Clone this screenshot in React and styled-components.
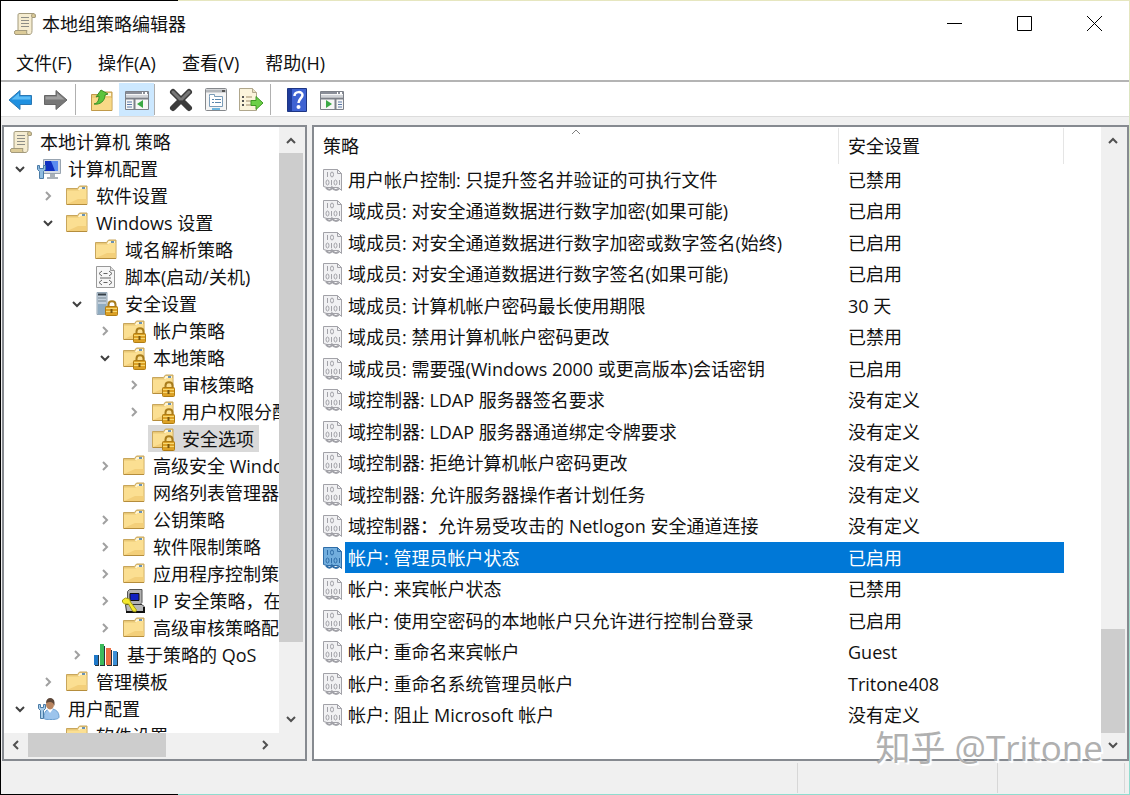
import React from "react";
import styled, { createGlobalStyle } from "styled-components";

const GlobalStyle = createGlobalStyle`
  * {
    box-sizing: border-box;
  }
  body {
    margin: 0;
    font-family: "Open Sans", "Noto Sans CJK SC", sans-serif;
    font-size: 18px;
    line-height: 26px;
    color: #111;
  }
  button {
    font: inherit;
    color: inherit;
    border: none;
    background: none;
    padding: 0;
    cursor: default;
  }
  svg {
    display: block;
    flex: none;
  }
`;

const Frame = styled.div`
  height: 100vh;
  padding: 1px;
  background: linear-gradient(90deg, #000 178px, transparent 178px),
    linear-gradient(#e6e6bf, #8fdccf);
`;

const Window = styled.main`
  display: flex;
  flex-direction: column;
  height: 100%;
  background: #f0f0f0;
  position: relative;
`;

const TitleBar = styled.header`
  display: flex;
  align-items: center;
  height: 45px;
  padding-left: 12px;
  background: #fff;
`;

const Title = styled.h1`
  flex: 1;
  margin: 0;
  padding-left: 5px;
  font-size: 18px;
  font-weight: 400;
`;

const CaptionButton = styled.button`
  display: flex;
  align-items: center;
  justify-content: center;
  width: 70px;
  height: 45px;
`;

const MenuBar = styled.nav`
  display: flex;
  align-items: flex-start;
  gap: 26px;
  height: 36px;
  padding: 4px 15px 0;
  background: #fff;
  border-bottom: 2px solid #b4b4b4;
`;

const ToolBar = styled.div`
  display: flex;
  align-items: center;
  height: 35px;
  padding: 1px 0 0 2px;
  background: #fff;
  border-bottom: 1px solid #dcdcdc;
`;

const ToolButton = styled.button`
  display: flex;
  align-items: center;
  justify-content: center;
  width: 35px;
  height: 33px;
  background: ${(props) => (props.$active ? "#cce8ff" : "transparent")};
`;

const ToolDivider = styled.span`
  width: 1px;
  height: 31px;
  margin: 0 8px 0 ${(props) => (props.$tight ? "0" : "2px")};
  background: #b0b0b0;
`;

const Panes = styled.div`
  display: grid;
  grid-template-columns: 305px minmax(0, 1fr);
  gap: 5px;
  flex: 1;
  min-height: 0;
  padding: 8px 0 0 1px;
`;

const Pane = styled.section`
  display: grid;
  grid-template-columns: minmax(0, 1fr) 26px;
  grid-template-rows: minmax(0, 1fr) auto;
  min-height: 0;
  border: 2px solid #868a90;
  background: #fff;
`;

const Tree = styled.ul`
  margin: 0;
  padding: 1px 0 0;
  list-style: none;
  overflow: hidden;
`;

const TreeRow = styled.li`
  display: flex;
  align-items: center;
  height: 27px;
  padding-left: ${(props) => props.$indent}px;
  white-space: nowrap;
`;

const Expander = styled.button`
  display: flex;
  align-items: center;
  justify-content: center;
  flex: none;
  width: 26px;
  height: 27px;
  padding-right: 2px;
`;

const TreeLabel = styled.span`
  display: flex;
  align-items: center;
  gap: 7px;
  height: 27px;
  padding: 0 5px 0 3px;
  background: ${(props) => (props.$selected ? "#d9d9d9" : "transparent")};
`;

const ScrollBar = styled.div`
  display: flex;
  flex-direction: ${(props) => (props.$horizontal ? "row" : "column")};
  min-height: 0;
  padding: ${(props) => (props.$horizontal ? "0 2px 2px 0" : "2px 2px 2px 0")};
  background: #f0f0f0;
`;

const ScrollButton = styled.button`
  display: flex;
  align-items: center;
  justify-content: center;
  width: 24px;
  height: 24px;
  flex: none;
`;

const ScrollTrack = styled.div`
  display: flex;
  flex-direction: ${(props) => (props.$horizontal ? "row" : "column")};
  flex: 1;
`;

const Spacer = styled.span`
  flex: ${(props) => props.$size};
`;

const Thumb = styled.span`
  flex: ${(props) => props.$size};
  background: #cdcdcd;
`;

const Corner = styled.div`
  background: #f0f0f0;
`;

const TableArea = styled.div`
  overflow: hidden;
  padding-top: 1px;
`;

const Table = styled.table`
  width: 100%;
  table-layout: fixed;
  border-collapse: separate;
  border-spacing: 0;
`;

const NameCol = styled.col``;

const ValueCol = styled.col`
  width: 225px;
`;

const RestCol = styled.col`
  width: 37px;
`;

const HeadCell = styled.th`
  position: relative;
  height: 36px;
  padding: 0 0 0 9px;
  text-align: left;
  font-weight: 400;
  border-right: ${(props) => (props.$last ? "none" : "1px solid #e5e5e5")};
`;

const SortMark = styled.span`
  position: absolute;
  top: -2px;
  left: 50%;
  margin-left: -6px;
`;

const PolicyRow = styled.tr`
  height: 31px;
  &:nth-child(even) {
    height: 32px;
  }
`;

const Cell = styled.td`
  padding: 0 0 0 9px;
  height: inherit;
  white-space: nowrap;
  color: ${(props) => (props.$selected ? "#fff" : "inherit")};
  background: ${(props) => (props.$selected ? "#0078d7" : "transparent")};
`;

const NameCell = styled.td`
  height: inherit;
  padding: 0 0 0 8px;
`;

const PolicyName = styled.div`
  display: flex;
  align-items: center;
  gap: 1px;
  height: 100%;
`;

const NameText = styled.span`
  display: flex;
  align-items: center;
  flex: 1;
  height: 100%;
  padding-left: 3px;
  white-space: nowrap;
  color: ${(props) => (props.$selected ? "#fff" : "inherit")};
  background: ${(props) => (props.$selected ? "#0078d7" : "transparent")};
`;

const StatusBar = styled.footer`
  display: grid;
  grid-template-columns: minmax(0, 1fr) 200px 127px;
  height: 33px;
  padding: 2px 4px 1px 0;
`;

const StatusCell = styled.span`
  border-right: 1px solid #d7d7d7;
`;

const Watermark = styled.span`
  position: absolute;
  right: 26px;
  bottom: 26px;
  font-size: 35px;
  line-height: 40px;
  color: #b0b0b0;
  text-shadow: 1px 1px 0 #fff, 2px 2px 1px #fff;
  pointer-events: none;
`;

const Chevron = ({ dir, color = "#505050", size = 12, weight = 2 }) => {
  const points = {
    up: "2,8 6,4 10,8",
    down: "2,4 6,8 10,4",
    left: "8,2 4,6 8,10",
    right: "4,2 8,6 4,10",
  };
  return (
    <svg width={size} height={size} viewBox="0 0 12 12">
      <polyline points={points[dir]} fill="none" stroke={color} strokeWidth={weight} />
    </svg>
  );
};

const ScrollIcon = () => (
  <svg width="24" height="24" viewBox="0 0 24 24">
    <path d="M7 1.500h13c2 0 3 2 2 4h-3v13c0 3-1 4-3 4H3c-2 0-2-4 0-4h2V4c0-2 0-2.500 2-2.500z" fill="#f5ecd0" stroke="#a39a7c" />
    <path d="M19 5.500c-1-2 0-4 1-4 2 0 3 2 2 4zM3 18.500h11c-1 2 0 4 1 4H3c-2 0-2-4 0-4z" fill="#dccb98" stroke="#a39a7c" />
    <path d="M8 5.500h8M8 8.500h8M8 11.500h8M8 14.500h8" stroke="#8d8d86" />
  </svg>
);

const FolderShape = () => (
  <>
    <path d="M1.500 4.500h11l2-2.500h7.500v18.500H1.500z" fill="#e9c877" stroke="#c8a65c" />
    <path d="M14.500 3h6.500v3h-8z" fill="#fff6d8" />
    <path d="M17 4h3" stroke="#6b93b5" strokeWidth="2" />
    <path d="M2 6.500h11.500l2-1.500h6v15H2z" fill="#fbdf92" />
    <path d="M13 15h8.500v5H2z" fill="#f3cf7a" />
    <path d="M2 20.500h20" stroke="#b58d3c" />
  </>
);

const LockShape = () => (
  <>
    <path d="M14.500 15.500v-3c0-4.500 7-4.500 7 0v3" fill="none" stroke="#a87c1c" strokeWidth="2" />
    <rect x="11.500" y="14.500" width="12" height="9" rx="1" fill="#dca126" stroke="#b07d14" />
    <path d="M12 16.500h11M12 19.500h11" stroke="#f7d870" />
    <path d="M17.500 17v4" stroke="#7a570f" strokeWidth="2" />
  </>
);

const FolderIcon = () => (
  <svg width="24" height="24" viewBox="0 0 24 24">
    <FolderShape />
  </svg>
);

const LockedFolderIcon = () => (
  <svg width="24" height="24" viewBox="0 0 24 24">
    <FolderShape />
    <LockShape />
  </svg>
);

const ServerLockIcon = () => (
  <svg width="24" height="24" viewBox="0 0 24 24">
    <path d="M3 .5h10v22H3z" fill="#c3d0dc" stroke="#94a6b5" />
    <path d="M4 2.500h8" stroke="#333e47" strokeWidth="2" />
    <path d="M4 6h8M4 9h8" stroke="#74848f" />
    <path d="M4 12h8v10H4z" fill="#8fabc0" />
    <LockShape />
  </svg>
);

const ScriptIcon = () => (
  <svg width="24" height="24" viewBox="0 0 24 24">
    <path d="M2.500 1.500h14l4 4v17h-18z" fill="#f7f7f7" stroke="#999" />
    <path d="M16.500 1.500v4h4" fill="#ddd" stroke="#999" />
    <path d="M8 6L5 8.500 8 11M15 6l3 2.500-3 2.500M9.500 8.500h4M8 15l-3 2.500L8 20M15 15l3 2.500-3 2.500M9.500 17.500h4M6 13h11" fill="none" stroke="#666" />
  </svg>
);

const ComputerIcon = () => (
  <svg width="24" height="24" viewBox="0 0 24 24">
    <path d="M6.500 2.500h17v14h-17z" fill="#d5dbe2" stroke="#98a4b1" />
    <path d="M8 4h13v10H8z" fill="#1030c0" />
    <path d="M14 4h7v10h-3z" fill="#5b8cf0" />
    <path d="M13 17h5v3h3v2H10v-2h3z" fill="#a9b1b8" />
    <path d="M.5 8.500v4l2 2v7h4v-7l2-2v-4h-2v3h-4v-3z" fill="#8fbce0" stroke="#4a7ba6" />
  </svg>
);

const UserIcon = () => (
  <svg width="24" height="24" viewBox="0 0 24 24">
    <path d="M7 21c0-7 3-9 7-9 5 0 8 3 8 8 0 2-4 2.500-8 2.500s-7 0-7-1.500z" fill="#9cc4ec" stroke="#6b9fd0" />
    <path d="M10 12l3 4 3-4z" fill="#fff" />
    <ellipse cx="13" cy="7.500" rx="4" ry="5" fill="#b98560" />
    <path d="M9 6c0-7 9-6 8.500 0v3c-1-4-4-5-8.500-3z" fill="#5c4638" />
    <path d="M1.500 7.500v4l2 2v8h3v-8l2-2v-4h-2v3h-3v-3z" fill="#a9cdea" stroke="#4a7ba6" />
  </svg>
);

const IpSecIcon = () => (
  <svg width="24" height="24" viewBox="0 0 24 24">
    <path d="M5.500 2.500l2-2H20v13l-2 2H5.500z" fill="#b0b0b0" stroke="#555" />
    <path d="M8 4.500h9v7H8z" fill="#1020c0" stroke="#111" />
    <path d="M3.500 15.500H20l2 2v5H4.500z" fill="#b8b8b8" stroke="#333" />
    <path d="M4 23h18v-5" fill="none" stroke="#111" strokeWidth="2" />
    <path d="M.5 11l3-2 4 1 1 3 6 8-1 2-3-1-4-7-4 0-2-2z" fill="#f5e92c" stroke="#a39b14" />
  </svg>
);

const QosIcon = () => (
  <svg width="26" height="24" viewBox="0 0 26 24">
    <path d="M3 12h2v11H1v-1h2zM9 3h2v20H6v-1h3zM16 7h2v16h-5v-1h3zM22 9h2v14h-5v-1h3z" fill="#26323c" />
    <path d="M0 12h4v10H0z" fill="#1f78c8" />
    <path d="M6 1h4v21H6z" fill="#3cba5c" />
    <path d="M12 5h5v17h-5z" fill="#ee7043" />
    <path d="M19 8h4v14h-4z" fill="#3d8fd6" />
  </svg>
);

const PolicyIcon = ({ selected }) => {
  const line = selected ? "#2f6da8" : "#a2a2a8";
  return (
    <svg width="22" height="24" viewBox="0 0 22 24">
      <path d="M1.500 1.500h14l4 4v17l-3-3H5l-3.500-1z" fill={selected ? "#72aede" : "#f1f1f3"} stroke={line} />
      <path d="M15.500 1.500v4h4" fill="none" stroke={line} />
      <path d="M5.500 4v5M9.500 12v5" stroke={line} strokeWidth="1" />
      <ellipse cx="10" cy="6.500" rx="1.500" ry="2.500" fill="none" stroke={line} />
      <ellipse cx="5.500" cy="14.500" rx="1.500" ry="2.500" fill="none" stroke={line} />
      <ellipse cx="13.500" cy="14.500" rx="1.500" ry="2.500" fill="none" stroke={line} />
      <path d="M17.500 12v5" stroke={line} />
      <path d="M4 19.500c2 3 5 3 6 0 2 3 5 3 7 1" fill="none" stroke={line} strokeWidth="2" />
    </svg>
  );
};

const ArrowIcon = ({ flip, fill, light, stroke }) => (
  <svg width="25" height="22" viewBox="0 0 25 22">
    <g transform={flip ? "translate(25 0) scale(-1 1)" : undefined}>
      <path d="M1 11L12 1.500v5h11.500v9H12v5z" fill={fill} stroke={stroke} strokeLinejoin="round" />
      <path d="M3.500 10.500L11 4v3.500h11.500v3z" fill={light} />
    </g>
  </svg>
);

const UpFolderIcon = () => (
  <svg width="24" height="24" viewBox="0 0 24 24">
    <path d="M1.500 6.500h11l2-2.500h7.500v18.500H1.500z" fill="#eecb78" stroke="#c09a4a" />
    <path d="M16 5h5v3h-5z" fill="#fff6d8" />
    <path d="M2 10h19.500v12H2z" fill="#f8d987" />
    <path d="M4 16c4-1 5-4 5-8L6 9l5-7 7 4-3 1c0 6-5 10-11 9z" fill="#5cc43c" stroke="#3c8f26" />
  </svg>
);

const PanelIcon = ({ mirrored }) => (
  <svg width="26" height="24" viewBox="0 0 26 24">
    <path d="M1.500 3.500h23v18h-23z" fill="#f6f6f6" stroke="#7c8088" />
    <path d="M2 5h22" stroke="#8a8e98" strokeWidth="2" />
    <path d="M2 8h22" stroke="#d0d3d8" strokeWidth="2" />
    <path d="M2 10.500h22" stroke="#7c8088" strokeWidth="2" />
    <path d="M18 5h1M21 5h2" stroke="#fff" strokeWidth="2" />
    {mirrored ? (
      <>
        <path d="M16.500 11v10" stroke="#7c8088" strokeWidth="2" />
        <path d="M19 14h4M19 16.500h4M19 19h4" stroke="#5a78a8" />
        <path d="M7 12l6 4-6 4z" fill="#3aa844" />
      </>
    ) : (
      <>
        <path d="M10.500 11v10" stroke="#7c8088" strokeWidth="2" />
        <path d="M3 14h5M3 16.500h5M3 19h5" stroke="#5a78a8" />
        <path d="M19 12l-6 4 6 4z" fill="#3aa844" />
      </>
    )}
  </svg>
);

const DeleteIcon = () => (
  <svg width="26" height="26" viewBox="0 0 26 26">
    <path d="M5 5l16 16M21 5L5 21" stroke="#3c3c3c" strokeWidth="6" strokeLinecap="round" />
    <path d="M5 5l7 7M21 5l-7 7" stroke="#777" strokeWidth="3" strokeLinecap="round" />
  </svg>
);

const PropertiesIcon = () => (
  <svg width="24" height="24" viewBox="0 0 24 24">
    <rect x="1.500" y=".5" width="21" height="22" rx="1" fill="#f5f5f5" stroke="#85888c" />
    <path d="M2 3h20" stroke="#b4b7bb" strokeWidth="3" />
    <path d="M18 3h3" stroke="#555" strokeWidth="2" />
    <path d="M5.500 8.500v-2h5v2h8v10h-13z" fill="#fff" stroke="#7b9cb8" />
    <path d="M8 11.500h2M11 11.500h6M8 14.500h2M11 14.500h6" stroke="#5a86ad" />
    <path d="M8 20h8v2H8z" fill="#6fb7e0" />
  </svg>
);

const ExportIcon = () => (
  <svg width="26" height="26" viewBox="0 0 26 26">
    <path d="M1.500 1.500h13l4 4v18h-17z" fill="#fbf4dc" stroke="#b0a78c" />
    <path d="M14.500 1.500v4h4" fill="#e8dfc0" stroke="#b0a78c" />
    <path d="M4 10h2M4 14h2M4 18h2" stroke="#555" strokeWidth="2" />
    <path d="M8 10h6M8 14h5M8 18h5" stroke="#a08c6c" />
    <path d="M13 13.500h5v-4l7 6.500-7 6.500v-4h-5z" fill="#6bd048" stroke="#3f9826" />
  </svg>
);

const HelpIcon = () => (
  <svg width="22" height="26" viewBox="0 0 22 26">
    <path d="M1.500 1.500h19v23h-19z" fill="#3f63d2" stroke="#1e3684" />
    <path d="M2 2h4v22H2z" fill="#1f3c9c" />
    <path d="M8.500 9c0-5 8-5 8-1 0 3-4 4-4 8" fill="none" stroke="#fff" strokeWidth="2.500" />
    <circle cx="12.500" cy="20" r="2" fill="#fff" />
  </svg>
);

const treeIcons = {
  scroll: ScrollIcon,
  computer: ComputerIcon,
  folder: FolderIcon,
  locked: LockedFolderIcon,
  script: ScriptIcon,
  server: ServerLockIcon,
  ipsec: IpSecIcon,
  qos: QosIcon,
  user: UserIcon,
};

const indents = [2, 4, 32, 61, 89, 118];

const treeItems = [
  { level: 0, icon: "scroll", label: "本地计算机 策略" },
  { level: 1, icon: "computer", label: "计算机配置", state: "open" },
  { level: 2, icon: "folder", label: "软件设置", state: "closed" },
  { level: 2, icon: "folder", label: "Windows 设置", state: "open" },
  { level: 3, icon: "folder", label: "域名解析策略" },
  { level: 3, icon: "script", label: "脚本(启动/关机)" },
  { level: 3, icon: "server", label: "安全设置", state: "open" },
  { level: 4, icon: "locked", label: "帐户策略", state: "closed" },
  { level: 4, icon: "locked", label: "本地策略", state: "open" },
  { level: 5, icon: "locked", label: "审核策略", state: "closed" },
  { level: 5, icon: "locked", label: "用户权限分配", state: "closed" },
  { level: 5, icon: "locked", label: "安全选项", selected: true },
  { level: 4, icon: "folder", label: "高级安全 Windows", state: "closed" },
  { level: 4, icon: "folder", label: "网络列表管理器策略" },
  { level: 4, icon: "folder", label: "公钥策略", state: "closed" },
  { level: 4, icon: "folder", label: "软件限制策略", state: "closed" },
  { level: 4, icon: "folder", label: "应用程序控制策略", state: "closed" },
  { level: 4, icon: "ipsec", label: "IP 安全策略，在", state: "closed" },
  { level: 4, icon: "folder", label: "高级审核策略配置", state: "closed" },
  { level: 3, icon: "qos", label: "基于策略的 QoS", state: "closed" },
  { level: 2, icon: "folder", label: "管理模板", state: "closed" },
  { level: 1, icon: "user", label: "用户配置", state: "open" },
  { level: 2, icon: "folder", label: "软件设置" },
];

const policies = [
  ["用户帐户控制: 只提升签名并验证的可执行文件", "已禁用"],
  ["域成员: 对安全通道数据进行数字加密(如果可能)", "已启用"],
  ["域成员: 对安全通道数据进行数字加密或数字签名(始终)", "已启用"],
  ["域成员: 对安全通道数据进行数字签名(如果可能)", "已启用"],
  ["域成员: 计算机帐户密码最长使用期限", "30 天"],
  ["域成员: 禁用计算机帐户密码更改", "已禁用"],
  ["域成员: 需要强(Windows 2000 或更高版本)会话密钥", "已启用"],
  ["域控制器: LDAP 服务器签名要求", "没有定义"],
  ["域控制器: LDAP 服务器通道绑定令牌要求", "没有定义"],
  ["域控制器: 拒绝计算机帐户密码更改", "没有定义"],
  ["域控制器: 允许服务器操作者计划任务", "没有定义"],
  ["域控制器：允许易受攻击的 Netlogon 安全通道连接", "没有定义"],
  ["帐户: 管理员帐户状态", "已启用"],
  ["帐户: 来宾帐户状态", "已禁用"],
  ["帐户: 使用空密码的本地帐户只允许进行控制台登录", "已启用"],
  ["帐户: 重命名来宾帐户", "Guest"],
  ["帐户: 重命名系统管理员帐户", "Tritone408"],
  ["帐户: 阻止 Microsoft 帐户", "没有定义"],
];

const SELECTED_POLICY = 12;

const Scroll = ({ horizontal, before, thumb, after }) => (
  <ScrollBar $horizontal={horizontal}>
    <ScrollButton aria-label={horizontal ? "向左" : "向上"}>
      <Chevron dir={horizontal ? "left" : "up"} />
    </ScrollButton>
    <ScrollTrack $horizontal={horizontal}>
      <Spacer $size={before} />
      <Thumb $size={thumb} />
      <Spacer $size={after} />
    </ScrollTrack>
    <ScrollButton aria-label={horizontal ? "向右" : "向下"}>
      <Chevron dir={horizontal ? "right" : "down"} />
    </ScrollButton>
  </ScrollBar>
);

const TreeItem = ({ item }) => {
  const Icon = treeIcons[item.icon];
  return (
    <TreeRow $indent={indents[item.level]}>
      {item.level > 0 && (
        <Expander as={item.state ? "button" : "span"} aria-label={item.state ? item.label : undefined}>
          {item.state === "open" && <Chevron dir="down" color="#404040" />}
          {item.state === "closed" && <Chevron dir="right" color="#a0a0a0" />}
        </Expander>
      )}
      <TreeLabel $selected={item.selected}>
        <Icon />
        {item.label}
      </TreeLabel>
    </TreeRow>
  );
};

const App = () => {
  return (
    <Frame>
      <GlobalStyle />
      <Window>
        <TitleBar>
          <ScrollIcon />
          <Title>本地组策略编辑器</Title>
          <CaptionButton aria-label="最小化">
            <svg width="15" height="15" viewBox="0 0 15 15">
              <path d="M0 7.500h15" stroke="#000" />
            </svg>
          </CaptionButton>
          <CaptionButton aria-label="最大化">
            <svg width="15" height="15" viewBox="0 0 15 15">
              <path d="M.5 .5h14v14H.5z" fill="none" stroke="#000" />
            </svg>
          </CaptionButton>
          <CaptionButton aria-label="关闭">
            <svg width="15" height="15" viewBox="0 0 15 15">
              <path d="M0 0l15 15M15 0L0 15" stroke="#000" />
            </svg>
          </CaptionButton>
        </TitleBar>
        <MenuBar>
          <button>文件(F)</button>
          <button>操作(A)</button>
          <button>查看(V)</button>
          <button>帮助(H)</button>
        </MenuBar>
        <ToolBar>
          <ToolButton aria-label="后退">
            <ArrowIcon fill="#1f90e0" light="#5cbcf5" stroke="#2a78b4" />
          </ToolButton>
          <ToolButton aria-label="前进">
            <ArrowIcon flip fill="#777" light="#a0a0a0" stroke="#666" />
          </ToolButton>
          <ToolDivider />
          <ToolButton aria-label="向上">
            <UpFolderIcon />
          </ToolButton>
          <ToolButton $active aria-label="显示控制台树">
            <PanelIcon />
          </ToolButton>
          <ToolDivider $tight />
          <ToolButton aria-label="删除">
            <DeleteIcon />
          </ToolButton>
          <ToolButton aria-label="属性">
            <PropertiesIcon />
          </ToolButton>
          <ToolButton aria-label="导出列表">
            <ExportIcon />
          </ToolButton>
          <ToolDivider />
          <ToolButton aria-label="帮助">
            <HelpIcon />
          </ToolButton>
          <ToolButton aria-label="显示操作窗格">
            <PanelIcon mirrored />
          </ToolButton>
        </ToolBar>
        <Panes>
          <Pane>
            <Tree>
              {treeItems.map((item, index) => (
                <TreeItem key={index} item={item} />
              ))}
            </Tree>
            <Scroll before={0} thumb={488} after={65} />
            <Scroll horizontal before={0} thumb={137} after={87} />
            <Corner />
          </Pane>
          <Pane>
            <TableArea>
              <Table>
                <colgroup>
                  <NameCol />
                  <ValueCol />
                  <RestCol />
                </colgroup>
                <thead>
                  <tr>
                    <HeadCell>
                      策略
                      <SortMark>
                        <Chevron dir="up" color="#808080" weight={1} />
                      </SortMark>
                    </HeadCell>
                    <HeadCell>安全设置</HeadCell>
                    <HeadCell $last />
                  </tr>
                </thead>
                <tbody>
                  {policies.map(([name, value], index) => {
                    const selected = index === SELECTED_POLICY;
                    return (
                      <PolicyRow key={name}>
                        <NameCell>
                          <PolicyName>
                            <PolicyIcon selected={selected} />
                            <NameText $selected={selected}>{name}</NameText>
                          </PolicyName>
                        </NameCell>
                        <Cell $selected={selected}>{value}</Cell>
                        <td />
                      </PolicyRow>
                    );
                  })}
                </tbody>
              </Table>
            </TableArea>
            <Scroll before={474} thumb={104} after={0} />
          </Pane>
        </Panes>
        <StatusBar>
          <StatusCell />
          <StatusCell />
          <StatusCell />
        </StatusBar>
        <Watermark>知乎 @Tritone</Watermark>
      </Window>
    </Frame>
  );
};

export default App;
